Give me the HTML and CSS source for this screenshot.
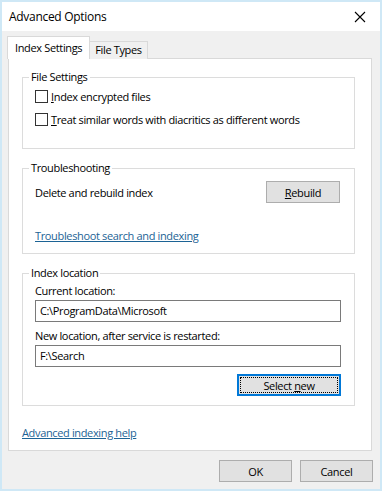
FILE: index.html
```html
<!DOCTYPE html>
<html>
<head>
	<title>Advanced Options</title>
	<link rel="stylesheet" href="styles.css">
</head>
<body>
	<div class="window">
		<div class="titlebar">
			<span class="title">Advanced Options</span>
			<span class="close">
				<svg width="12" height="12" viewBox="0 0 12 12"><path d="M1 1 L11 11 M11 1 L1 11" stroke="#000" stroke-width="1.1" fill="none"/></svg>
			</span>
		</div>
		<div class="dialog">
			<div class="tabs">
				<div class="tab active">Index Settings</div>
				<div class="tab">File Types</div>
			</div>
			<div class="panel">
				<fieldset class="group files">
					<legend>File Settings</legend>
					<label class="check"><span class="box"></span><span><u>I</u>ndex encrypted files</span></label>
					<label class="check"><span class="box"></span><span><u>T</u>reat similar words with diacritics as different words</span></label>
				</fieldset>

				<fieldset class="group trouble">
					<legend>Troubleshooting</legend>
					<div class="row">
						<span>Delete and rebuild index</span>
						<button class="btn rebuild"><u>R</u>ebuild</button>
					</div>
					<a class="link trouble-link" href="#">Troubleshoot search and indexing</a>
				</fieldset>

				<fieldset class="group location">
					<legend>Index location</legend>
					<div class="field-label first">Current location:</div>
					<div class="textbox">C:\ProgramData\Microsoft</div>
					<div class="field-label">New location, after service is restarted:</div>
					<div class="textbox">F:\Search</div>
					<div class="row-right">
						<button class="btn select focused">Select <u>n</u>ew</button>
					</div>
				</fieldset>

				<a class="link help" href="#">Advanced indexing help</a>
			</div>
			<div class="actions">
				<button class="btn">OK</button>
				<button class="btn">Cancel</button>
			</div>
		</div>
	</div>
</body>
</html>
```

FILE: styles.css
```css
html, body{
	margin: 0;
	padding: 0;
}
body{
	background: #cfe8f6;
	font-family: "Open Sans", "Noto Sans", sans-serif;
	font-size: 11px;
	letter-spacing: -0.35px;
	color: #000;
}
.window{
	width: 378px;
	height: 487px;
	border: 2px solid #cfe8f6;
	background: #f0f0f0;
	display: flex;
	flex-direction: column;
}
.titlebar{
	height: 29px;
	background: #fff;
	display: flex;
	align-items: center;
	justify-content: space-between;
	padding: 0 8px 0 7px;
}
.title{
	font-size: 12px;
	letter-spacing: -0.3px;
}
.close{
	display: flex;
	width: 12px;
	height: 12px;
	margin-right: 6px;
}
.dialog{
	flex: 1;
	padding: 6px 8px 0 6px;
}
.tabs{
	display: flex;
	align-items: flex-end;
	height: 22px;
	margin-bottom: -1px;
	position: relative;
	z-index: 1;
}
.tab{
	border: 1px solid #d9d9d9;
	border-bottom: none;
	line-height: 16px;
	height: 17px;
	padding: 0 5px;
	background: #f0f0f0;
}
.tab.active{
	background: #fff;
	height: 22px;
	line-height: 21px;
	padding: 0 7px;
	margin-left: -1px;
	margin-right: -1px;
	position: relative;
	z-index: 2;
}
.panel{
	background: #fff;
	border: 1px solid #d9d9d9;
	padding: 10px 16px 9px 13px;
}
.group{
	margin: 0;
	border: 1px solid #dcdcdc;
	padding: 0 13px 0 6px;
}
.group legend{
	padding: 0 2px;
	line-height: 16px;
}
.group > *:not(legend){
	margin-left: 6px;
}
.files{
	padding-bottom: 17px;
}
.check{
	display: flex;
	align-items: center;
	height: 24px;
	margin-top: -1px;
}
.box{
	width: 11px;
	height: 11px;
	border: 1px solid #333;
	background: #fff;
	margin-right: 3px;
}
.trouble{
	margin-top: 11px;
	padding-bottom: 9px;
}
.row{
	display: flex;
	align-items: center;
	justify-content: space-between;
	margin-top: 5px;
	padding-right: 0;
}
.btn{
	font-family: inherit;
	font-size: 11px;
	letter-spacing: -0.35px;
	color: #000;
	background: #e1e1e1;
	border: 1px solid #adadad;
	height: 22px;
	padding: 0;
	width: 73px;
}
.rebuild{
	width: 74px;
	margin-right: 1px;
}
.link{
	display: block;
	color: #1c6395;
	line-height: 16px;
}
.trouble-link{
	margin-top: 25px;
}
.location{
	margin-top: 11px;
	padding-bottom: 9px;
}
.field-label{
	line-height: 16px;
	margin-top: 6px;
}
.field-label.first{
	margin-top: 2px;
}
.textbox{
	margin-top: 1px;
	height: 20px;
	line-height: 20px;
	border: 1px solid #7a7a7a;
	padding: 0 4px;
}
.row-right{
	display: flex;
	justify-content: flex-end;
	margin-top: 7px;
}
.select{
	width: 104px;
}
.focused{
	border: 2px solid #0078d7;
	outline: 1px dotted #000;
	outline-offset: -4px;
}
.help{
	margin-top: 19px;
	width: max-content;
}
.actions{
	display: flex;
	justify-content: flex-end;
	gap: 8px;
	margin-top: 9px;
	margin-right: -1px;
}
```
